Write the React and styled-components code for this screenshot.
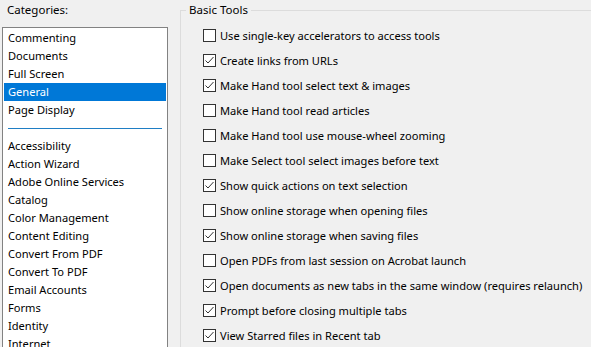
import React from 'react';
import styled, { createGlobalStyle } from 'styled-components';

const GlobalStyle = createGlobalStyle`
  html, body {
    margin: 0;
    padding: 0;
    background: #f0f0f0;
    overflow: hidden;
  }
  body {
    font-family: 'Noto Sans', 'Open Sans', sans-serif;
    font-size: 11.1px;
    color: #000;
  }
`;

const Page = styled.div`
  width: 591px;
  height: 347px;
  display: flex;
  overflow: hidden;
`;

const LeftColumn = styled.div`
  width: 166px;
  padding-left: 2px;
  flex-shrink: 0;
  display: flex;
  flex-direction: column;
`;

const CategoriesLabel = styled.div`
  height: 27px;
  flex-shrink: 0;
  padding-left: 5px;
  line-height: 20px;
  font-size: 11.5px;
`;

const ListBox = styled.div`
  flex: 1;
  min-height: 0;
  overflow: hidden;
  background: #fff;
  border: 1px solid #828282;
  border-bottom: none;
  padding: 1px 1px 0;
`;

const ListItem = styled.div`
  height: 18px;
  line-height: 18px;
  padding-left: 4px;
  white-space: nowrap;
  background: ${p => (p.$selected ? '#0078d7' : 'transparent')};
  color: ${p => (p.$selected ? '#fff' : '#000')};
`;

const Separator = styled.div`
  height: 18px;
  display: flex;
  align-items: center;
  padding: 0 4px 0 4px;

  &::after {
    content: '';
    flex: 1;
    height: 1px;
    background: #1f7ec4;
  }
`;

const GroupBox = styled.fieldset`
  margin: 3px 0 0 12px;
  padding: 6px 0 0 22px;
  border: 1px solid #dcdcdc;
  border-right: none;
  border-bottom: none;
  flex: 1;
  min-width: 0;
`;

const Legend = styled.legend`
  padding: 0 3px;
  margin-left: -17px;
  line-height: 14px;
  font-size: 11.5px;
`;

const OptionRow = styled.label`
  height: 25px;
  display: flex;
  align-items: center;
  gap: 4px;
  white-space: nowrap;
`;

const Box = styled.span`
  width: 11px;
  height: 11px;
  border: 1px solid #333;
  background: #fff;
  display: flex;
  align-items: center;
  justify-content: center;
  flex-shrink: 0;
`;

const Checkbox = ({ checked }) => (
  <Box>
    {checked && (
      <svg width="11" height="11" viewBox="0 0 11 11">
        <polyline points="1.5,5.5 4,8 9.5,2" fill="none" stroke="#333" strokeWidth="1" />
      </svg>
    )}
  </Box>
);

const categoriesTop = ['Commenting', 'Documents', 'Full Screen', 'General', 'Page Display'];
const categoriesBottom = [
  'Accessibility', 'Action Wizard', 'Adobe Online Services', 'Catalog', 'Color Management',
  'Content Editing', 'Convert From PDF', 'Convert To PDF', 'Email Accounts', 'Forms',
  'Identity', 'Internet',
];

const options = [
  ['Use single-key accelerators to access tools', false],
  ['Create links from URLs', true],
  ['Make Hand tool select text & images', true],
  ['Make Hand tool read articles', false],
  ['Make Hand tool use mouse-wheel zooming', false],
  ['Make Select tool select images before text', false],
  ['Show quick actions on text selection', true],
  ['Show online storage when opening files', false],
  ['Show online storage when saving files', true],
  ['Open PDFs from last session on Acrobat launch', false],
  ['Open documents as new tabs in the same window (requires relaunch)', true],
  ['Prompt before closing multiple tabs', true],
  ['View Starred files in Recent tab', true],
];

const App = () => (
  <>
    <GlobalStyle />
    <Page>
      <LeftColumn>
        <CategoriesLabel>Categories:</CategoriesLabel>
        <ListBox>
          {categoriesTop.map(c => (
            <ListItem key={c} $selected={c === 'General'}>{c}</ListItem>
          ))}
          <Separator />
          {categoriesBottom.map(c => (
            <ListItem key={c}>{c}</ListItem>
          ))}
        </ListBox>
      </LeftColumn>
      <GroupBox>
        <Legend>Basic Tools</Legend>
        {options.map(([text, checked]) => (
          <OptionRow key={text}>
            <Checkbox checked={checked} />
            {text}
          </OptionRow>
        ))}
      </GroupBox>
    </Page>
  </>
);

export default App;
